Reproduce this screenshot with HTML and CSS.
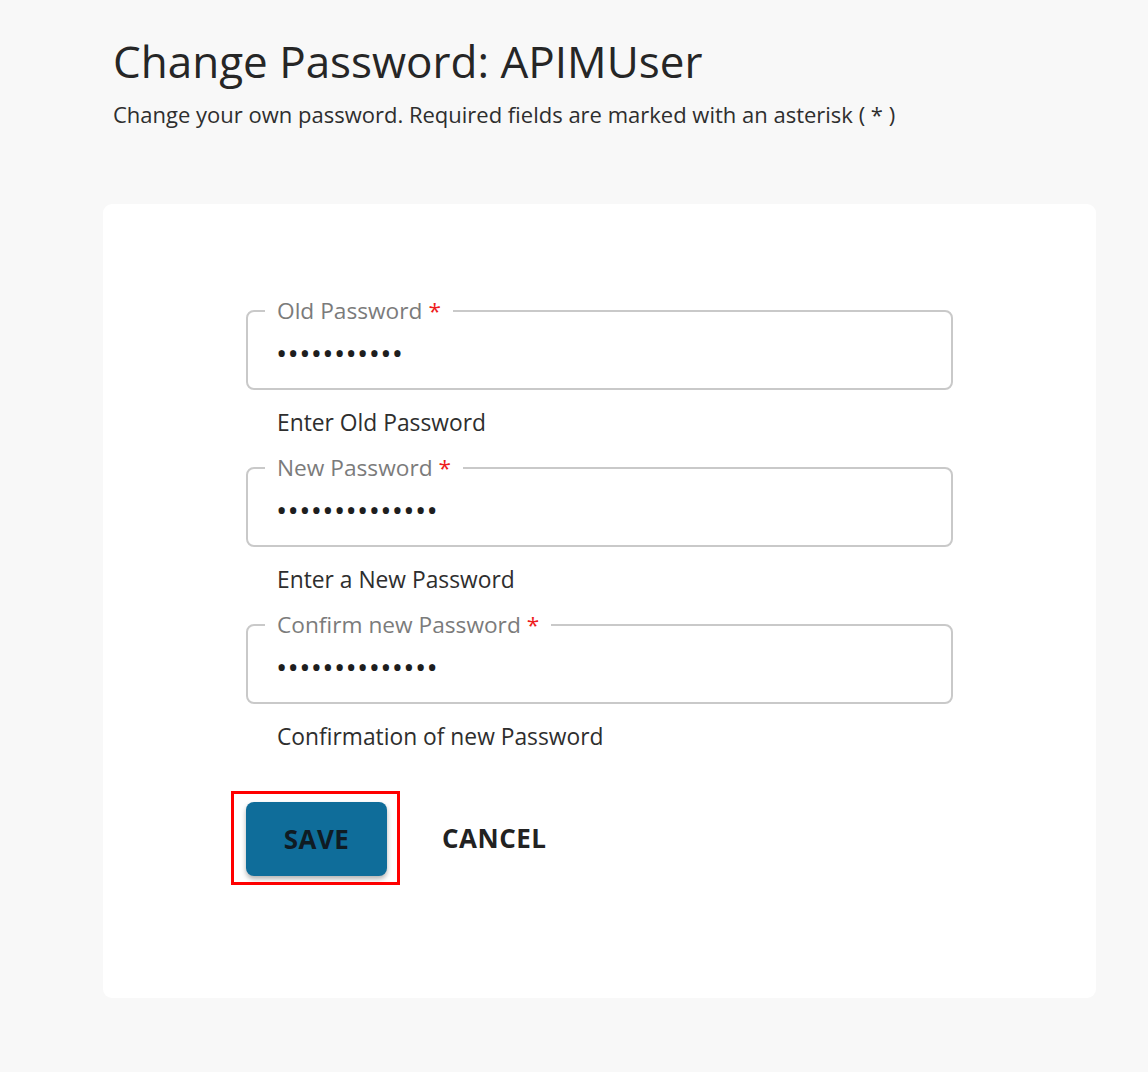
FILE: index.html
```html
<!DOCTYPE html>
<html lang="en">
<head>
<meta charset="utf-8">
<title>Change Password: APIMUser</title>
<link rel="stylesheet" href="styles.css">
</head>
<body>
<div class="page">
  <header class="page-header">
    <h1 class="title">Change Password: APIMUser</h1>
    <p class="subtitle">Change your own password. Required fields are marked with an asterisk ( * )</p>
  </header>
  <main class="card">
    <form class="form">
      <div class="field">
        <fieldset class="outline">
          <legend class="label">Old Password<span class="req">*</span></legend>
          <div class="value">•••••••••••</div>
        </fieldset>
        <div class="helper">Enter Old Password</div>
      </div>
      <div class="field">
        <fieldset class="outline">
          <legend class="label">New Password<span class="req">*</span></legend>
          <div class="value">••••••••••••••</div>
        </fieldset>
        <div class="helper">Enter a New Password</div>
      </div>
      <div class="field">
        <fieldset class="outline">
          <legend class="label">Confirm new Password<span class="req">*</span></legend>
          <div class="value">••••••••••••••</div>
        </fieldset>
        <div class="helper">Confirmation of new Password</div>
      </div>
      <div class="actions">
        <div class="highlight">
          <button type="button" class="btn btn-save">SAVE</button>
        </div>
        <button type="button" class="btn btn-cancel">CANCEL</button>
      </div>
    </form>
  </main>
</div>
</body>
</html>
```
FILE: styles.css
```css
* { box-sizing: border-box; }
html, body {
  margin: 0;
  padding: 0;
  background: #f8f8f8;
}
body {
  font-family: "Open Sans", "Noto Sans", sans-serif;
  color: #2b2b2b;
}
.page {
  padding: 30px 0 0 103px;
  width: 1148px;
  height: 1072px;
}
.page-header {
  padding-left: 10px;
}
.title {
  margin: 0;
  font-size: 44px;
  font-weight: 400;
  line-height: 62px;
  color: #262626;
}
.subtitle {
  margin: 7px 0 0;
  font-size: 22px;
  line-height: 30px;
  color: #2e2e2e;
}
.card {
  margin-top: 75px;
  width: 993px;
  height: 794px;
  background: #ffffff;
  border-radius: 9px;
  padding: 93px 0 0 143px;
}
.form {
  width: 707px;
}
.field {
  margin-bottom: 17px;
}
.outline {
  margin: 0;
  padding: 0;
  border: 2px solid #c9c9c9;
  border-radius: 8px;
  min-width: 0;
}
.label {
  margin-left: 17px;
  padding: 0 12px;
  font-size: 22.7px;
  line-height: 27px;
  color: #7b7b7b;
}
.req {
  color: #ee1c1c;
  margin-left: 6px;
}
.value {
  height: 56px;
  margin-bottom: 8px;
  padding-left: 28px;
  display: flex;
  align-items: center;
  font-size: 30px;
  letter-spacing: 0.3px;
  color: #1e1e1e;
}
.helper {
  margin-top: 19px;
  padding-left: 31px;
  font-size: 22.8px;
  line-height: 28px;
  color: #2e2e2e;
}
.actions {
  margin-top: 40px;
  display: flex;
  align-items: center;
}
.highlight {
  border: 3px solid #f00;
  padding: 8px 10px 6px 12px;
  margin-left: -15px;
}
.btn {
  font-family: "Open Sans", "Noto Sans", sans-serif;
  font-weight: 700;
  font-size: 26px;
  letter-spacing: 0.5px;
  border: none;
  cursor: pointer;
}
.btn-save {
  display: block;
  width: 141px;
  height: 74px;
  background: #0f6d9a;
  color: #0f1b23;
  border-radius: 8px;
  box-shadow: 0 3px 5px rgba(0,0,0,0.3);
}
.btn-cancel {
  background: transparent;
  color: #222;
  margin-left: 42px;
  padding: 0;
}
```
